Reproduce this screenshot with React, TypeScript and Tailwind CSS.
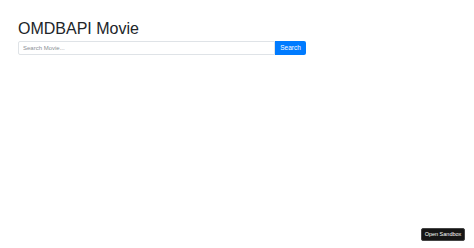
export default function App() {
  return (
    <div className="min-h-screen w-full bg-white relative" style={{ fontFamily: '"Liberation Sans", Arial, sans-serif' }}>
      <div className="pl-[18px] pt-[19px] w-[306px]">
        <h1 className="text-[16px] leading-[19px] text-[#212529] mb-[3px]">OMDBAPI Movie</h1>
        <div className="flex h-[14px]">
          <input
            type="text"
            placeholder="Search Movie..."
            className="flex-1 min-w-0 h-full border border-[#dfe3e7] rounded-l-[2px] px-[4px] text-[6px] text-[#495057] placeholder:text-[#8a9096] outline-none"
          />
          <button className="h-full w-[31px] bg-[#007bff] text-white text-[6.5px] rounded-r-[2px]">Search</button>
        </div>
      </div>
      <button className="absolute left-[421px] top-[228px] w-[44px] h-[13px] bg-[#151515] border border-[#444] rounded-[2px] text-white text-[5.5px] leading-none">
        Open Sandbox
      </button>
    </div>
  )
}
